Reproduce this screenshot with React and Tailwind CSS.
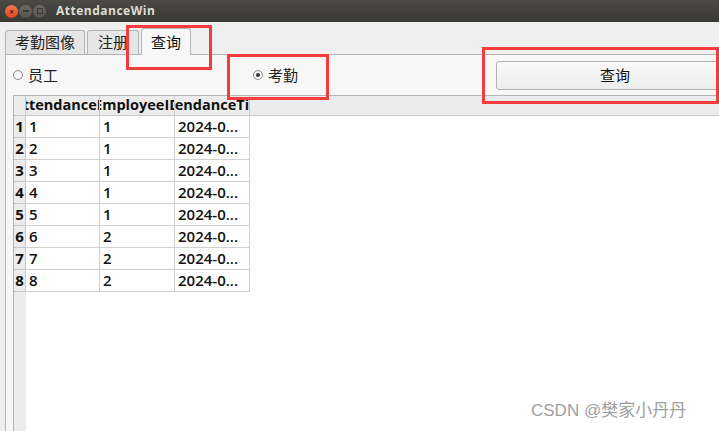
const rows = [
  { id: "1", emp: "1" },
  { id: "2", emp: "1" },
  { id: "3", emp: "1" },
  { id: "4", emp: "1" },
  { id: "5", emp: "1" },
  { id: "6", emp: "2" },
  { id: "7", emp: "2" },
  { id: "8", emp: "2" },
];

const font = { fontFamily: '"Open Sans", "Noto Sans CJK SC", sans-serif' };

const Radio = ({ checked, label }) => (
  <div className="flex items-center gap-[5px]">
    <span className="w-[10px] h-[10px] rounded-full border border-[#8c8c8c] bg-gradient-to-b from-[#f0f0f0] to-white flex items-center justify-center">
      {checked && <span className="w-[4px] h-[4px] rounded-full bg-[#333]" />}
    </span>
    <span className="text-[15px] text-[#222] leading-none">{label}</span>
  </div>
);

const App = () => {
  return (
    <div className="w-[719px] h-[431px] relative overflow-hidden bg-[#efefef] flex flex-col" style={font}>
      {/* title bar */}
      <div className="h-[22px] bg-gradient-to-b from-[#4b4a45] to-[#3a3935] flex items-center pl-[5px]">
        <span className="w-[13px] h-[13px] rounded-full bg-gradient-to-b from-[#f2784c] to-[#de4a1c] flex items-center justify-center text-[#5a1f0b] text-[9px] font-bold leading-none">×</span>
        <span className="ml-[1px] w-[13px] h-[13px] rounded-full bg-gradient-to-b from-[#6b6a66] to-[#55544f] flex items-center justify-center">
          <span className="w-[6px] h-[2px] bg-[#3a3935]" />
        </span>
        <span className="ml-[1px] w-[13px] h-[13px] rounded-full bg-gradient-to-b from-[#6b6a66] to-[#55544f] flex items-center justify-center">
          <span className="w-[6px] h-[6px] border border-[#3a3935]" />
        </span>
        <span className="ml-[10px] text-[12px] font-bold text-[#dfdbd2] tracking-[0.5px]">AttendanceWin</span>
      </div>

      {/* tabs */}
      <div className="h-[32px] flex items-end pl-[5px] gap-[2px]">
        <div className="h-[24px] px-[9px] border border-b-0 border-[#b4b4b4] rounded-t-[3px] bg-[#e6e6e6] flex items-center text-[15px] text-[#222]">考勤图像</div>
        <div className="h-[24px] px-[10px] border border-b-0 border-[#b4b4b4] rounded-t-[3px] bg-[#e6e6e6] flex items-center text-[15px] text-[#222]">注册</div>
        <div className="h-[27px] -mb-px relative z-10 px-[9px] border border-b-0 border-[#b4b4b4] rounded-t-[3px] bg-[#f7f7f7] flex items-center text-[15px] text-[#111]">查询</div>
      </div>

      {/* pane */}
      <div className="flex-1 ml-[5px] border-l border-t border-[#b4b4b4] bg-[#f7f7f7] flex flex-col min-h-0">
        <div className="h-[40px] flex items-center pl-[7px]">
          <div className="w-[240px] shrink-0"><Radio label="员工" /></div>
          <div className="w-[243px] shrink-0"><Radio checked label="考勤" /></div>
          <div className="w-[238px] h-[29px] shrink-0 rounded-[3px] border border-[#b2b2b2] bg-gradient-to-b from-[#fafafa] to-[#ececec] flex items-center justify-center text-[15px] text-[#111]">查询</div>
        </div>

        {/* table */}
        <div className="flex-1 ml-[7px] border-l border-t border-[#b4b4b4] bg-white flex flex-col min-h-0">
          <div className="h-[20px] shrink-0 bg-[#ececec] flex border-b border-[#c8c8c8] text-[14.5px] font-bold text-[#111]">
            <div className="w-[12px] shrink-0 border-r border-[#c8c8c8]" />
            {["AttendanceID", "EmployeeID", "AttendanceTime"].map((h, i) => (
              <div key={i} className={`${i === 0 ? "w-[74px]" : "w-[75px]"} shrink-0 border-r border-[#c8c8c8] overflow-hidden flex justify-center items-center`}>
                <span className="whitespace-nowrap leading-none">{h}</span>
              </div>
            ))}
          </div>
          {rows.map((r) => (
            <div key={r.id} className="h-[22px] shrink-0 flex text-[15px] font-semibold text-[#111]">
              <div className="w-[12px] shrink-0 bg-[#ececec] border-r border-b border-[#c8c8c8] flex items-center justify-center font-bold">{r.id}</div>
              <div className="w-[74px] shrink-0 border-r border-b border-[#d0d0d0] flex items-center pl-[3px]">{r.id}</div>
              <div className="w-[75px] shrink-0 border-r border-b border-[#d0d0d0] flex items-center pl-[3px]">{r.emp}</div>
              <div className="w-[75px] shrink-0 border-r border-b border-[#d0d0d0] flex items-center pl-[3px] whitespace-nowrap">2024-0...</div>
            </div>
          ))}
          <div className="flex-1 flex">
            <div className="w-[12px] bg-[#ececec]" />
          </div>
        </div>
      </div>

      {/* annotation boxes */}
      <div className="absolute left-[126px] top-[25px] w-[86px] h-[45px] border-[3px] border-[#f53c3c] pointer-events-none" />
      <div className="absolute left-[227px] top-[54px] w-[102px] h-[46px] border-[3px] border-[#f53c3c] pointer-events-none" />
      <div className="absolute left-[482px] top-[47px] w-[237px] h-[57px] border-[3px] border-[#f53c3c] pointer-events-none" />

      {/* watermark */}
      <div className="absolute left-[531px] top-[398px] text-[17px] text-[#a0a0a0] whitespace-nowrap" style={{ fontFamily: '"Liberation Sans", "Noto Sans CJK SC", sans-serif' }}>
        CSDN @樊家小丹丹
      </div>
    </div>
  );
};

export default App;
